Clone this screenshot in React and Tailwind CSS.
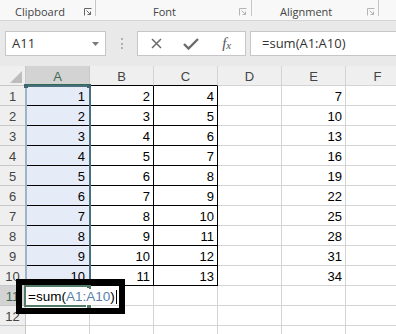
import React from "react";

const data = [
  [1, 2, 4, "", 7],
  [2, 3, 5, "", 10],
  [3, 4, 6, "", 13],
  [4, 5, 7, "", 16],
  [5, 6, 8, "", 19],
  [6, 7, 9, "", 22],
  [7, 8, 10, "", 25],
  [8, 9, 11, "", 28],
  [9, 10, 12, "", 31],
  [10, 11, 13, "", 34],
  ["", "", "", "", ""],
  ["", "", "", "", ""],
  ["", "", "", "", ""],
];

function Launcher({ color }) {
  return (
    <svg width="8" height="8" viewBox="0 0 8 8" fill="none" stroke={color} strokeWidth="1">
      <path d="M0.5 7.5V0.5H7.5" />
      <path d="M2.5 2.5L6.5 6.5M6.5 3.5V6.5H3.5" />
    </svg>
  );
}

function Ribbon() {
  return (
    <div className="h-[21px] bg-[#f8f8f8] border-b border-[#d4d4d4] flex font-['Open_Sans'] text-[11px] leading-[14px] text-[#444]">
      <div className="w-[95px] shrink-0 flex items-center pt-[3px] pl-[15px] pr-[3px]">
        <span>Clipboard</span>
        <span className="ml-auto flex"><Launcher color="#666" /></span>
      </div>
      <div className="w-px h-[16px] bg-[#c6c6c6] shrink-0" />
      <div className="w-[155px] shrink-0 flex items-center pt-[3px] pl-[57px] pr-[4px]">
        <span>Font</span>
        <span className="ml-auto flex"><Launcher color="#b4b4b4" /></span>
      </div>
      <div className="w-px h-[16px] bg-[#c6c6c6] shrink-0" />
      <div className="w-[126px] shrink-0 flex items-center pt-[3px] pl-[28px] pr-[3px]">
        <span>Alignment</span>
        <span className="ml-auto flex"><Launcher color="#b4b4b4" /></span>
      </div>
      <div className="w-px h-[16px] bg-[#c6c6c6] shrink-0" />
    </div>
  );
}

function FormulaBar() {
  return (
    <div className="h-[45px] bg-[#e9e9e9] flex items-start pt-[10px] pl-[5px] overflow-hidden font-['Open_Sans']">
      <div className="w-[101px] h-[25px] shrink-0 bg-white border border-[#c6c6c6] flex items-center justify-between pl-[6px] pr-[6px]">
        <span className="text-[13px] text-[#333] leading-none">A11</span>
        <svg width="7" height="4" viewBox="0 0 7 4"><path d="M0 0H7L3.5 4Z" fill="#7a7a7a" /></svg>
      </div>
      <div className="w-[31px] h-[25px] shrink-0 flex flex-col items-center justify-center gap-[2.5px]">
        <div className="w-[2px] h-[2px] bg-[#b2b2b2]" />
        <div className="w-[2px] h-[2px] bg-[#b2b2b2]" />
        <div className="w-[2px] h-[2px] bg-[#b2b2b2]" />
      </div>
      <div className="w-[109px] h-[25px] shrink-0 bg-white border border-[#c6c6c6] flex items-center pl-[1px]">
        <div className="w-[35px] flex justify-center">
          <svg width="11" height="11" viewBox="0 0 11 11" stroke="#6b6b6b" strokeWidth="1.5">
            <path d="M1 1L10 10M10 1L1 10" />
          </svg>
        </div>
        <div className="w-[35px] flex justify-center">
          <svg width="16" height="12" viewBox="0 0 16 12" fill="none" stroke="#6b6b6b" strokeWidth="2.4">
            <path d="M1 6L5.5 10.5L15 1" />
          </svg>
        </div>
        <div className="w-[37px] flex justify-center font-['Liberation_Serif'] italic text-[#555] text-[15px] leading-none">
          <span>f</span><span className="text-[11px] mt-[4px]">x</span>
        </div>
      </div>
      <div className="ml-[4px] w-[160px] h-[25px] shrink-0 bg-white border border-[#c6c6c6] flex items-center pl-[11px]">
        <span className="text-[13px] text-[#333] leading-none">=sum(A1:A10)</span>
      </div>
    </div>
  );
}

function HeaderRow() {
  return (
    <div className="flex h-[20px]">
      <div className="w-[26px] shrink-0 h-full bg-[#efefef] border-r border-b border-[#c8c8c8] relative">
        <svg className="absolute left-[10px] top-[4px]" width="13" height="13" viewBox="0 0 13 13">
          <path d="M0 13H12V1Z" fill="#bdbdbd" />
        </svg>
      </div>
      <div className="w-[64px] shrink-0 h-full bg-[#d3d3d3] border-r border-r-[#c8c8c8] border-b-2 border-b-[#2e6b52] flex items-end justify-center text-[#3d6b56]">
        A
      </div>
      <div className="w-[64px] shrink-0 h-full bg-[#efefef] border-r border-r-[#d4d4d4] border-b border-b-black flex items-end justify-center pb-[1px] text-[#444]">
        B
      </div>
      <div className="w-[64px] shrink-0 h-full bg-[#efefef] border-r border-r-[#d4d4d4] border-b border-b-black flex items-end justify-center pb-[1px] text-[#444]">
        C
      </div>
      {["D", "E", "F"].map((l) => (
        <div key={l} className="w-[64px] shrink-0 h-full bg-[#efefef] border-r border-b border-[#d4d4d4] flex items-end justify-center pb-[1px] text-[#444]">
          {l}
        </div>
      ))}
    </div>
  );
}

function DataRow({ r, vals }) {
  const bordered = r <= 10;
  const active = r === 11;
  return (
    <div className="flex h-[20px]">
      <div
        className={
          active
            ? "w-[26px] shrink-0 h-full bg-[#d3d3d3] border-r border-b border-r-[#2e6b52] border-b-[#c8c8c8] flex items-end justify-center pb-[1px] text-[#3d6b56]"
            : "w-[26px] shrink-0 h-full bg-[#efefef] border-r border-b border-[#c8c8c8] flex items-end justify-center pb-[1px] text-[#444]"
        }
      >
        {r <= 12 ? r : ""}
      </div>
      {/* A */}
      <div
        className={
          bordered
            ? "w-[64px] shrink-0 h-full bg-[#e6ecf7] border-r border-b border-black flex items-end justify-end pr-[4px] pb-[1px]"
            : "w-[64px] shrink-0 h-full border-r border-b border-[#d4d4d4] flex items-end justify-end pr-[4px] pb-[1px] relative"
        }
      >
        {active ? (
          <span className="absolute left-[2px] bottom-[1px] pr-[1px] whitespace-nowrap text-[13.5px] text-black bg-white z-10">
            =sum(<span className="text-[#5a7fab]">A1:A10</span>)
            <span className="inline-block w-px h-[14px] bg-black align-[-3px] ml-px" />
          </span>
        ) : (
          vals[0]
        )}
      </div>
      {/* B, C */}
      {[1, 2].map((i) => (
        <div
          key={i}
          className={
            bordered
              ? "w-[64px] shrink-0 h-full border-r border-b border-black flex items-end justify-end pr-[3px] pb-[1px]"
              : "w-[64px] shrink-0 h-full border-r border-b border-[#d4d4d4] flex items-end justify-end pr-[3px] pb-[1px]"
          }
        >
          {vals[i]}
        </div>
      ))}
      {/* D, E */}
      {[3, 4].map((i) => (
        <div key={i} className="w-[64px] shrink-0 h-full border-r border-b border-[#d4d4d4] flex items-end justify-end pr-[3px] pb-[1px]">
          {vals[i]}
        </div>
      ))}
      {/* F */}
      <div className="w-[64px] shrink-0 h-full border-r border-b border-[#d4d4d4]" />
    </div>
  );
}

export default function App() {
  return (
    <div className="relative w-[396px] h-[334px] overflow-hidden bg-white">
      <Ribbon />
      <FormulaBar />
      <div className="font-['Liberation_Sans'] text-[13px] leading-[15px] text-black">
        <HeaderRow />
        {data.map((vals, i) => (
          <DataRow key={i} r={i + 1} vals={vals} />
        ))}
      </div>

      {/* reference range A1:A10 highlight */}
      <div className="absolute left-[25px] top-[85px] w-[66px] h-[202px] border-2 border-[#47707c] border-l-[#9fb4c4] pointer-events-none" />
      <div className="absolute left-[24px] top-[84px] w-[4px] h-[4px] bg-[#3f6472]" />
      <div className="absolute left-[87px] top-[84px] w-[4px] h-[4px] bg-[#3f6472]" />
      <div className="absolute left-[87px] top-[284px] w-[4px] h-[4px] bg-[#3f6472]" />

      {/* active cell A11 */}
      <div className="absolute left-[24px] top-[285px] w-[67px] h-[22px] border-2 border-[#537b66]" />
      <div className="absolute left-[86px] top-[304px] w-[6px] h-[5px] bg-[#537b66] border border-white" />

      {/* black annotation frame */}
      <div className="absolute left-[16px] top-[279px] w-[109px] h-[35px] border-[6px] border-black" />
    </div>
  );
}
